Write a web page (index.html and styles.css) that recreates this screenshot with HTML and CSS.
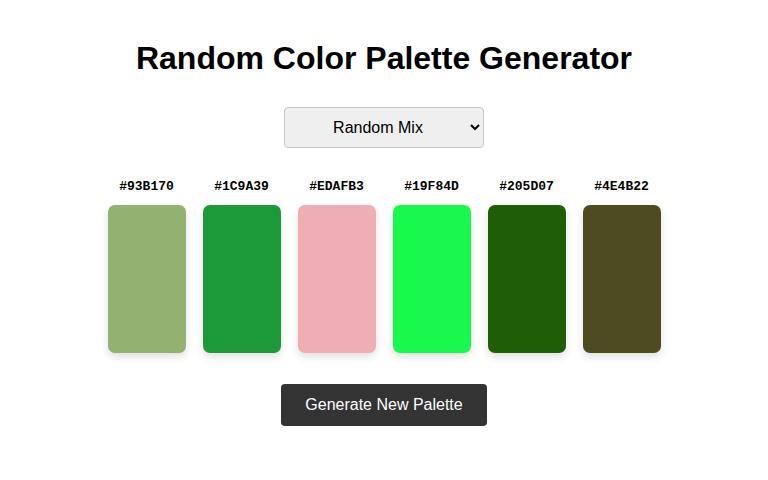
FILE: index.html
```html
<!DOCTYPE html>
<html lang="en">
<head>
<meta charset="UTF-8">
<title>Random Color Palette Generator</title>
<link rel="stylesheet" href="styles.css">
</head>
<body>
<div class="app">
  <h1 class="title">Random Color Palette Generator</h1>
  <select class="mode">
    <option>Random Mix</option>
  </select>
  <div class="palette">
    <div class="color"><span class="hex">#93B170</span><div class="swatch" style="background:#93B170"></div></div>
    <div class="color"><span class="hex">#1C9A39</span><div class="swatch" style="background:#1C9A39"></div></div>
    <div class="color"><span class="hex">#EDAFB3</span><div class="swatch" style="background:#EDAFB3"></div></div>
    <div class="color"><span class="hex">#19F84D</span><div class="swatch" style="background:#19F84D"></div></div>
    <div class="color"><span class="hex">#205D07</span><div class="swatch" style="background:#205D07"></div></div>
    <div class="color"><span class="hex">#4E4B22</span><div class="swatch" style="background:#4E4B22"></div></div>
  </div>
  <button class="generate">Generate New Palette</button>
</div>
</body>
</html>
```
FILE: styles.css
```css
html, body {
  margin: 0;
  padding: 0;
  background: #ffffff;
}
body {
  font-family: "Liberation Sans", Arial, sans-serif;
  color: #000;
}
.app {
  display: flex;
  flex-direction: column;
  align-items: center;
  padding-top: 40px;
}
.title {
  margin: 0;
  font-size: 32px;
  line-height: 37px;
  font-weight: bold;
}
.mode {
  margin-top: 30px;
  width: 200px;
  height: 41px;
  font-family: "Liberation Sans", Arial, sans-serif;
  font-size: 16px;
  text-align: center;
  text-align-last: center;
  background: #efefef;
  border: 1px solid #c4c4c4;
  border-radius: 4px;
  color: #000;
  padding: 0 6px;
}
.palette {
  margin-top: 31px;
  display: flex;
  gap: 17px;
}
.color {
  display: flex;
  flex-direction: column;
  align-items: center;
  gap: 11px;
}
.hex {
  font-family: "Liberation Mono", "Courier New", monospace;
  font-weight: bold;
  font-size: 13px;
  line-height: 15px;
}
.swatch {
  width: 78px;
  height: 148px;
  border-radius: 7px;
  box-shadow: 0 4px 8px rgba(0, 0, 0, 0.12);
}
.generate {
  margin-top: 31px;
  background: #333333;
  color: #ffffff;
  border: none;
  border-radius: 4px;
  font-family: "Liberation Sans", Arial, sans-serif;
  font-size: 16px;
  line-height: 18px;
  padding: 12px 24px;
  cursor: pointer;
}
```
